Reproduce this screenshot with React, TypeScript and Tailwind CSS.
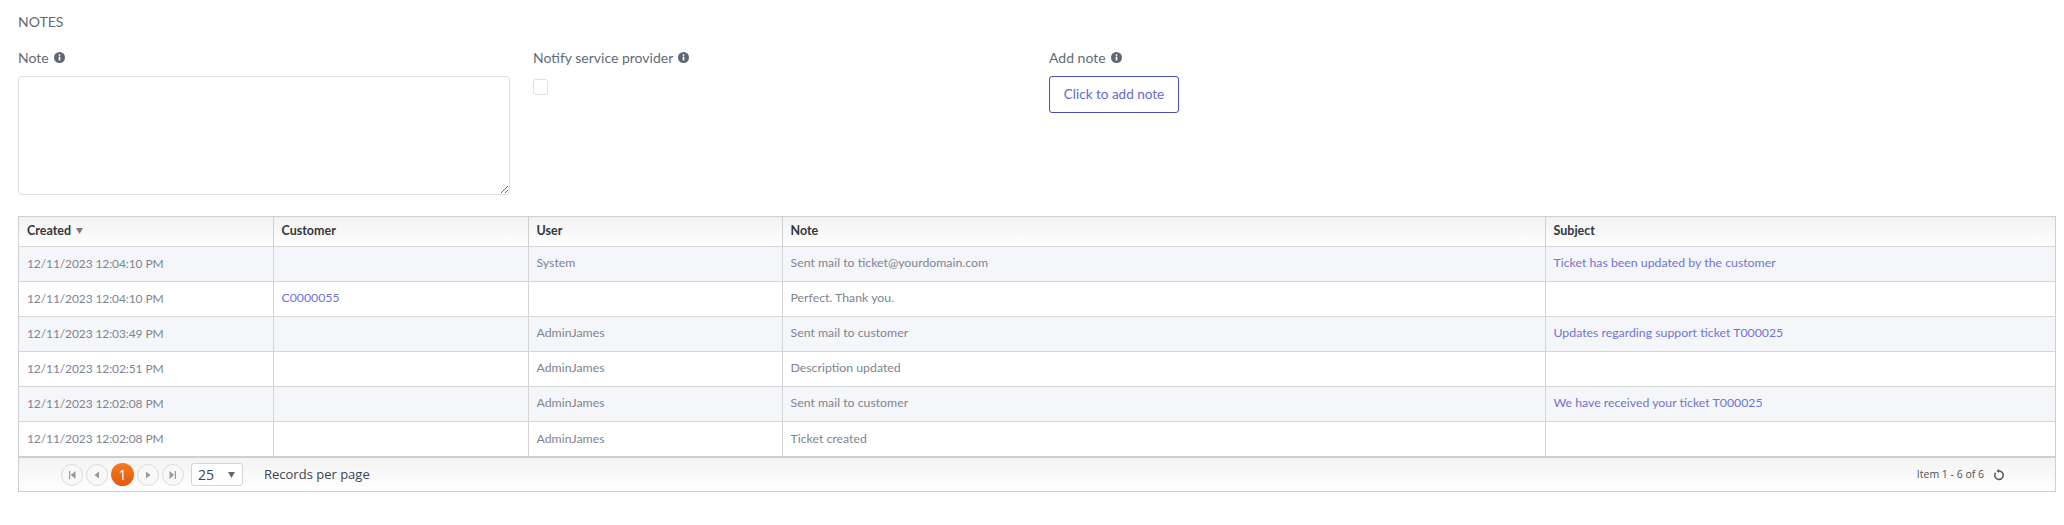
import React from "react";

interface NoteRow {
  created: string;
  customer?: string;
  user?: string;
  note: string;
  subject?: string;
}

const rows: NoteRow[] = [
  { created: "12/11/2023 12:04:10 PM", user: "System", note: "Sent mail to ticket@yourdomain.com", subject: "Ticket has been updated by the customer" },
  { created: "12/11/2023 12:04:10 PM", customer: "C0000055", note: "Perfect. Thank you." },
  { created: "12/11/2023 12:03:49 PM", user: "AdminJames", note: "Sent mail to customer", subject: "Updates regarding support ticket T000025" },
  { created: "12/11/2023 12:02:51 PM", user: "AdminJames", note: "Description updated" },
  { created: "12/11/2023 12:02:08 PM", user: "AdminJames", note: "Sent mail to customer", subject: "We have received your ticket T000025" },
  { created: "12/11/2023 12:02:08 PM", user: "AdminJames", note: "Ticket created" },
];

function InfoIcon() {
  return (
    <svg viewBox="0 0 12 12" className="ml-[5px] h-[11px] w-[11px]">
      <circle cx="6" cy="6" r="6" fill="#5f6672" />
      <rect x="5.1" y="5" width="1.8" height="4.2" fill="#fff" />
      <rect x="5.1" y="2.6" width="1.8" height="1.6" fill="#fff" />
    </svg>
  );
}

function FieldLabel({ text }: { text: string }) {
  return (
    <div className="flex h-[20px] items-center text-[14px] text-[#636b76]">
      {text}
      <InfoIcon />
    </div>
  );
}

function PagerButton({ d }: { d: string }) {
  return (
    <span className="flex h-[22px] w-[22px] items-center justify-center rounded-full border border-[#dcdcdc] bg-[#f8f8f8]">
      <svg viewBox="0 0 10 10" className="h-[10px] w-[10px]" fill="#9a9a9a">
        <path d={d} />
      </svg>
    </span>
  );
}

export default function App() {
  const headCell = "border-r border-[#cfcfcf] px-2 text-left text-[12.5px] font-bold text-[#33373d] last:border-r-0";
  const bodyCell = "border-r border-t border-[#d5d5d5] px-2 last:border-r-0";
  const dateCell = `${bodyCell} text-[12px] tracking-[-0.1px] text-[#7d8591]`;
  const textCell = `${bodyCell} text-[12.3px] text-[#7d8591]`;
  const linkCell = `${bodyCell} text-[12.3px] text-[#7074d4]`;

  return (
    <div className="h-[525px] w-[2064px] bg-white pl-[18px] pr-[8px] font-['Lato',sans-serif]">
      <h2 className="pt-[14px] text-[14px] leading-[16px] text-[#636b76]">NOTES</h2>

      <div className="mt-[17px] flex h-[142px]">
        <div className="w-[515px]">
          <FieldLabel text="Note" />
          <textarea className="mt-[9px] block h-[119px] w-[492px] rounded-[4px] border border-[#dedede] bg-white" />
        </div>
        <div className="w-[516px]">
          <FieldLabel text="Notify service provider" />
          <input
            type="checkbox"
            className="mt-[12px] block h-[16px] w-[15px] appearance-none rounded-[3px] border border-[#dedede] bg-white"
          />
        </div>
        <div>
          <FieldLabel text="Add note" />
          <button className="mt-[9px] h-[37px] w-[130px] rounded-[3px] border border-[#4a4fb5] bg-white text-[13.5px] text-[#6569d2]">
            Click to add note
          </button>
        </div>
      </div>

      <div className="mt-[27px] border border-[#cfcfcf]">
        <table className="w-full table-fixed border-collapse">
          <colgroup>
            <col className="w-[254px]" />
            <col className="w-[255px]" />
            <col className="w-[254px]" />
            <col className="w-[763px]" />
            <col />
          </colgroup>
          <thead>
            <tr className="h-[29px] bg-gradient-to-b from-[#f2f2f2] to-white">
              <th className={headCell}>
                <span className="flex items-center gap-[5px]">
                  Created
                  <svg viewBox="0 0 8 7" className="h-[6px] w-[7px]" fill="#7a7a7a">
                    <path d="M0 0h8L4 7z" />
                  </svg>
                </span>
              </th>
              <th className={headCell}>Customer</th>
              <th className={headCell}>User</th>
              <th className={headCell}>Note</th>
              <th className={headCell}>Subject</th>
            </tr>
          </thead>
          <tbody>
            {rows.map((row, index) => (
              <tr key={index} className={index % 2 === 0 ? "h-[35px] bg-[#f5f6fa]" : "h-[35px] bg-white"}>
                <td className={dateCell}>{row.created}</td>
                <td className={linkCell}>{row.customer}</td>
                <td className={textCell}>{row.user}</td>
                <td className={textCell}>{row.note}</td>
                <td className={linkCell}>{row.subject}</td>
              </tr>
            ))}
          </tbody>
        </table>

        <div className="flex h-[35px] items-center border-t-2 border-[#cfcfcf] bg-gradient-to-b from-[#f3f3f3] to-white pl-[42px] pr-[50px] font-['Open_Sans',sans-serif]">
          <div className="flex items-center gap-[3px]">
            <PagerButton d="M2 1h1.2v8H2zM8.5 1v8L3.8 5z" />
            <PagerButton d="M7 1.5v7L2.5 5z" />
            <span className="flex h-[23px] w-[23px] items-center justify-center rounded-full bg-gradient-to-b from-[#f47a1f] to-[#e2590f] text-[14px] text-white">
              1
            </span>
            <PagerButton d="M3 1.5v7L7.5 5z" />
            <PagerButton d="M8 1h-1.2v8H8zM1.5 1v8L6.2 5z" />
          </div>
          <div className="ml-[7px] flex h-[23px] w-[52px] items-center justify-between rounded-[3px] border border-[#d5d5d5] bg-white pl-[6px] pr-[7px] text-[14px] text-[#3d4450]">
            25
            <svg viewBox="0 0 8 7" className="h-[6px] w-[7px]" fill="#5f6672">
              <path d="M0 0h8L4 7z" />
            </svg>
          </div>
          <span className="ml-[21px] text-[13px] text-[#3d4450]">Records per page</span>
          <span className="ml-auto text-[10.5px] text-[#4a5058]">Item 1 - 6 of 6</span>
          <svg viewBox="0 0 24 24" className="ml-[9px] h-[12px] w-[12px]" fill="none" stroke="#555" strokeWidth="3">
            <path d="M12 4a8.5 8.5 0 1 1-7 3.6" />
            <path d="M12 0v8l-5-4z" fill="#555" stroke="none" />
          </svg>
        </div>
      </div>
    </div>
  );
}
